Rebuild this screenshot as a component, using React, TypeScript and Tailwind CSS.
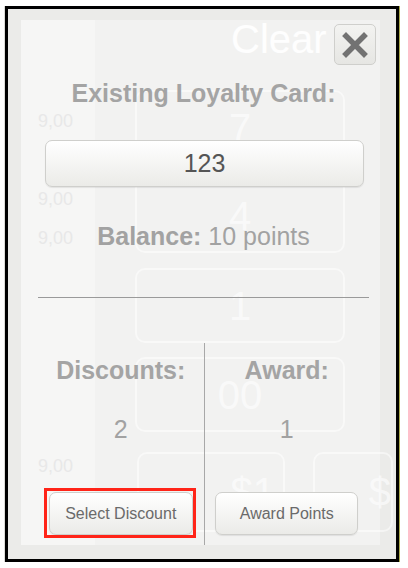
import React from 'react';

const font = { fontFamily: '"Liberation Sans", Arial, Helvetica, sans-serif' };

// faint point-of-sale screen showing through the overlay
const Backdrop: React.FC = () => (
  <div className="absolute inset-0 pointer-events-none">
    <div className="absolute left-[13px] top-[11px] right-[16px] bottom-[14px] bg-[#f2f2f1]" />
    <div className="absolute left-[13px] top-[11px] w-[74px] bottom-[14px] bg-[#f6f6f5]" />
    {[103, 181, 220, 448].map((top) => (
      <span
        key={top}
        className="absolute left-[30px] text-[18px] leading-none font-light text-[#e8e8e8]"
        style={{ top }}
      >
        9,00
      </span>
    ))}
    <span className="absolute left-[223px] top-[10px] text-[40px] leading-none text-white/90">Clear</span>
    {[
      { top: 81, label: '7' },
      { top: 169, label: '4' },
      { top: 259, label: '1' },
      { top: 348, label: '00' },
    ].map((k) => (
      <div
        key={k.top}
        className="absolute left-[127px] w-[210px] h-[75px] rounded-[10px] border-2 border-white/50 flex items-center justify-center text-[40px] font-light text-white/60"
        style={{ top: k.top }}
      >
        {k.label}
      </div>
    ))}
    <div className="absolute left-[129px] top-[443px] w-[148px] h-[80px] rounded-[10px] border-2 border-white/50 flex items-center justify-end pr-2 text-[40px] text-white/60">
      $1
    </div>
    <div className="absolute left-[305px] top-[443px] w-[80px] h-[80px] rounded-[10px] border-2 border-white/50 flex items-center justify-end text-[40px] text-white/60">
      $
    </div>
  </div>
);

const Pill: React.FC<{ children: React.ReactNode; className?: string }> = ({ children, className }) => (
  <div
    className={
      'flex items-center justify-center rounded-[7px] border border-[#cfcfcc] bg-gradient-to-b from-white to-[#ebebe8] shadow-[inset_0_1px_0_#ffffff,0_1px_1px_rgba(0,0,0,0.08)] ' +
      (className ?? '')
    }
  >
    {children}
  </div>
);

export default function App() {
  return (
    <div className="w-[408px] h-[568px] bg-white pl-[5px] pt-[6px] overflow-hidden" style={font}>
      <div className="relative w-[394px] h-[556px] border-[3px] border-black bg-[#ebebe9] shadow-[1px_0_0_#a9a84c,-1px_0_0_#dcdcd8]">
        <Backdrop />

        <div className="relative flex flex-col h-full">
          <div className="flex justify-end pt-[15px] pr-[20px]">
            <button className="w-[42px] h-[41px] rounded-[5px] border border-[#cfcfcc] bg-gradient-to-b from-[#f3f3f1] to-[#e6e6e3] flex items-center justify-center">
              <svg width="26" height="26" viewBox="0 0 26 26">
                <path d="M4 4 L22 22 M22 4 L4 22" stroke="#727272" strokeWidth="5.5" strokeLinecap="square" fill="none" />
              </svg>
            </button>
          </div>

          <div className="ml-[30px] mr-[27px] flex flex-col">
            <h2 className="mt-[13px] text-center text-[25px] leading-[30px] font-bold text-[#a4a4a4]">
              Existing Loyalty Card:
            </h2>

            <Pill className="mt-[32px] ml-[7px] mr-[5px] h-[47px] text-[25px] text-[#555555]">123</Pill>

            <p className="mt-[34px] text-center text-[25px] leading-[30px] text-[#a2a2a2]">
              <span className="font-bold">Balance:</span> 10 points
            </p>

            <div className="mt-[46px] h-px bg-[#9a9a9a]" />

            <div className="mt-[45px] h-[202px] grid grid-cols-2">
              <div className="flex flex-col items-center pt-[12px]">
                <span className="text-[25px] leading-[30px] font-bold text-[#a4a4a4]">Discounts:</span>
                <span className="mt-[29px] text-[25px] leading-[30px] text-[#a2a2a2]">2</span>
                <div className="relative mt-[48px]">
                  <Pill className="w-[144px] h-[43px] text-[16px] text-[#6a6a6a]">Select Discount</Pill>
                  <div className="absolute -left-[5px] -right-[3px] -top-[4px] -bottom-[3px] border-[3px] border-[#ff2418]" />
                </div>
              </div>
              <div className="flex flex-col items-center pt-[12px] border-l border-[#a8a8a8]">
                <span className="text-[25px] leading-[30px] font-bold text-[#a4a4a4]">Award:</span>
                <span className="mt-[29px] text-[25px] leading-[30px] text-[#a2a2a2]">1</span>
                <Pill className="mt-[48px] w-[143px] h-[43px] text-[16px] text-[#6a6a6a]">Award Points</Pill>
              </div>
            </div>
          </div>
        </div>
      </div>
    </div>
  );
}
